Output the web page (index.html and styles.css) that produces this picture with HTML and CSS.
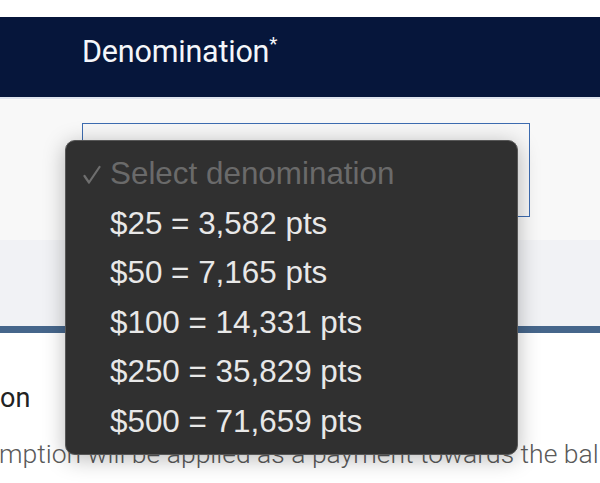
FILE: index.html
```html
<!DOCTYPE html>
<html lang="en">
<head>
<meta charset="utf-8">
<title>Denomination</title>
<link rel="stylesheet" href="styles.css">
</head>
<body>
<div class="page">
  <div class="top-gap"></div>
  <header class="bar">
    <span class="bar-label">Denomination<sup class="req">*</sup></span>
  </header>
  <div class="rule"></div>
  <section class="field-area">
    <div class="select-box"></div>
  </section>
  <div class="band"></div>
  <div class="accent"></div>
  <section class="content">
    <h2 class="heading">on</h2>
    <p class="body-text">mption will be applied as a payment towards the bal</p>
  </section>

  <ul class="dropdown">
    <li class="opt opt-placeholder"><svg class="check" width="18" height="20" viewBox="0 0 18 20" aria-hidden="true"><polyline points="1.5,11 6,17.5 16.5,2" fill="none" stroke="#6e6e6e" stroke-width="2.2" stroke-linecap="round" stroke-linejoin="round"/></svg>Select denomination</li>
    <li class="opt">$25 = 3,582 pts</li>
    <li class="opt">$50 = 7,165 pts</li>
    <li class="opt">$100 = 14,331 pts</li>
    <li class="opt">$250 = 35,829 pts</li>
    <li class="opt">$500 = 71,659 pts</li>
  </ul>
</div>
</body>
</html>
```
FILE: styles.css
```css
html, body {
  margin: 0;
  padding: 0;
  background: #ffffff;
}
.page {
  position: relative;
  width: 600px;
  height: 483px;
  overflow: hidden;
  font-family: Roboto, "Liberation Sans", sans-serif;
}
.top-gap {
  height: 17px;
}
.bar {
  height: 80px;
  background: #06163b;
  display: flex;
  align-items: center;
  padding-left: 82px;
}
.bar-label {
  color: #f4f6fa;
  font-size: 30.5px;
  font-weight: 400;
  letter-spacing: -0.2px;
  margin-top: -12px;
}
.req {
  font-size: 19px;
  vertical-align: 12px;
  line-height: 0;
}
.rule {
  height: 2px;
  background: #dfe4ee;
}
.field-area {
  background: #f8f8f8;
  padding: 24px 0 23px 82px;
}
.select-box {
  width: 446px;
  height: 92px;
  border: 1.5px solid #3d6cb0;
  background: #f7f7f7;
}
.band {
  height: 86px;
  background: #f1f2f5;
}
.accent {
  height: 7px;
  background: #46668b;
}
.content {
  padding: 0;
}
.heading {
  margin: 49px 0 0 0;
  font-size: 27px;
  font-weight: 400;
  color: #222222;
  line-height: 32px;
}
.body-text {
  margin: 25px 0 0 -1px;
  font-size: 26.5px;
  font-weight: 300;
  color: #5a5a5a;
  white-space: nowrap;
  line-height: 30px;
}
.dropdown {
  position: absolute;
  left: 65px;
  top: 140px;
  width: 453px;
  height: 315px;
  margin: 0;
  padding: 8px 0 0 0;
  box-sizing: border-box;
  list-style: none;
  background: #303030;
  border: 1px solid #575757;
  border-radius: 10px;
  box-shadow: 0 4px 22px rgba(0, 0, 0, 0.28);
  font-family: "Liberation Sans", Arial, sans-serif;
}
.opt {
  height: 49.6px;
  line-height: 49.6px;
  padding-left: 44px;
  font-size: 31.4px;
  color: #e8e8e8;
  position: relative;
  white-space: nowrap;
}
.opt-placeholder {
  color: #6a6a6a;
}
.check {
  position: absolute;
  left: 17px;
  top: 16px;
}
```
